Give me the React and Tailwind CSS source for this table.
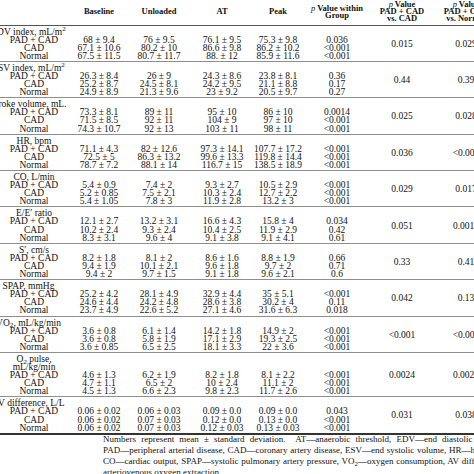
const groups = [
  {
    label: [<>EDV index, mL/m<sup>2</sup></>],
    long: true,
    cols: [
      ["68 ± 9.4", "67.1 ± 10.6", "67.5 ± 11.5"],
      ["76 ± 9.5", "80.2 ± 10", "80.7 ± 11.7"],
      ["76.1 ± 9.5", "86.6 ± 9.8", "88. ± 12"],
      ["75.3 ± 9.8", "86.2 ± 10.2", "85.9 ± 11.6"],
      ["0.036", "<0.001", "<0.001"],
    ],
    pCad: "0.015",
    pNormal: "0.029",
  },
  {
    label: [<>ESV index, mL/m<sup>2</sup></>],
    long: true,
    cols: [
      ["26.3 ± 8.4", "25.2 ± 8.7", "24.9 ± 8.9"],
      ["26 ± 9", "24.5 ± 8.1", "21.3 ± 9.6"],
      ["24.3 ± 8.6", "24.2 ± 9.5", "23 ± 9.2"],
      ["23.8 ± 8.1", "21.1 ± 8.8", "20.5 ± 9.7"],
      ["0.36", "0.17", "0.27"],
    ],
    pCad: "0.44",
    pNormal: "0.39",
  },
  {
    label: ["Stroke volume, mL."],
    long: true,
    cols: [
      ["73.3 ± 8.1", "71.5 ± 8.5", "74.3 ± 10.7"],
      ["89 ± 11", "92 ± 11", "92 ± 13"],
      ["95 ± 10", "104 ± 9", "103 ± 11"],
      ["86 ± 10", "97 ± 10", "98 ± 11"],
      ["0.0014", "<0.001", "<0.001"],
    ],
    pCad: "0.025",
    pNormal: "0.028",
  },
  {
    label: ["HR, bpm"],
    cols: [
      ["71.1 ± 4.3", "72.5 ± 5", "78.7 ± 7.2"],
      ["82 ± 12.6", "86.3 ± 13.2", "88.1 ± 14"],
      ["97.3 ± 14.1", "99.6 ± 13.3", "116.7 ± 15"],
      ["107.7 ± 17.2", "119.8 ± 14.4", "138.5 ± 18.9"],
      ["<0.001", "<0.001", "<0.001"],
    ],
    pCad: "0.036",
    pNormal: "<0.001",
  },
  {
    label: ["CO, L/min"],
    cols: [
      ["5.4 ± 0.9", "5.2 ± 0.85", "5.4 ± 1.05"],
      ["7.4 ± 2", "7.5 ± 2.1", "7.8 ± 3"],
      ["9.3 ± 2.7", "10.3 ± 2.4", "11.9 ± 2.8"],
      ["10.5 ± 2.9", "12.7 ± 2.2", "13.2 ± 3"],
      ["<0.001", "<0.001", "<0.001"],
    ],
    pCad: "0.029",
    pNormal: "0.017",
  },
  {
    label: ["E/E′ ratio"],
    cols: [
      ["12.1 ± 2.7", "10.2 ± 2.4", "8.3 ± 3.1"],
      ["13.2 ± 3.1", "9.3 ± 2.4", "9.6 ± 4"],
      ["16.6 ± 4.3", "10.4 ± 2.5", "9.1 ± 3.8"],
      ["15.8 ± 4", "11.9 ± 2.9", "9.1 ± 4.1"],
      ["0.034", "0.42", "0.61"],
    ],
    pCad: "0.051",
    pNormal: "0.0012",
  },
  {
    label: ["S′, cm/s"],
    cols: [
      ["8.2 ± 1.8", "9.4 ± 1.9", "9.4 ± 2"],
      ["8.1 ± 2", "10.1 ± 2.1", "9.7 ± 1.5"],
      ["8.6 ± 1.6", "9.6 ± 1.8", "9.1 ± 1.8"],
      ["8.8 ± 1.9", "9.7 ± 2", "9.6 ± 2.1"],
      ["0.66", "0.71", "0.6"],
    ],
    pCad: "0.33",
    pNormal: "0.41",
  },
  {
    label: ["SPAP, mmHg"],
    long: true,
    cols: [
      ["25.2 ± 4.2", "24.6 ± 4.4", "23.7 ± 4.9"],
      ["28.1 ± 4.9", "24.2 ± 4.8", "22.6 ± 5.2"],
      ["32.9 ± 4.4", "28.6 ± 3.8", "27.1 ± 4.6"],
      ["35 ± 5.1", "30.2 ± 4", "31.6 ± 6.3"],
      ["<0.001", "0.11", "0.018"],
    ],
    pCad: "0.042",
    pNormal: "0.13",
  },
  {
    label: [<>VO<sub>2</sub>, mL/kg/min</>],
    long: true,
    cols: [
      ["3.6 ± 0.8", "3.6 ± 0.8", "3.6 ± 0.85"],
      ["6.1 ± 1.4", "5.8 ± 1.9", "6.5 ± 2.5"],
      ["14.2 ± 1.8", "17.1 ± 2.9", "18.1 ± 3.3"],
      ["14.9 ± 2", "19.3 ± 2.5", "22 ± 3.6"],
      ["<0.001", "<0.001", "<0.001"],
    ],
    pCad: "<0.001",
    pNormal: "<0.001",
  },
  {
    label: [<>O<sub>2</sub> pulse,</>, "mL/kg/min"],
    cols: [
      ["4.6 ± 1.3", "4.7 ± 1.1", "4.5 ± 1.3"],
      ["6.2 ± 1.9", "6.5 ± 2", "6.6 ± 2.3"],
      ["8.2 ± 1.8", "10 ± 2.4", "9.8 ± 2.3"],
      ["8.1 ± 2.2", "11.1 ± 2", "11.7 ± 2.6"],
      ["<0.001", "<0.001", "<0.001"],
    ],
    pCad: "0.0024",
    pNormal: "0.0027",
  },
  {
    label: ["AV difference, L/L"],
    long: true,
    cols: [
      ["0.06 ± 0.02", "0.06 ± 0.02", "0.06 ± 0.02"],
      ["0.06 ± 0.03", "0.07 ± 0.03", "0.07 ± 0.03"],
      ["0.09 ± 0.0", "0.12 ± 0.0", "0.12 ± 0.03"],
      ["0.09 ± 0.0", "0.13 ± 0.0", "0.13 ± 0.03"],
      ["0.043", "<0.001", "<0.001"],
    ],
    pCad: "0.031",
    pNormal: "0.038",
  },
];

const gridCols = "grid grid-cols-[68px_62px_58px_68px_44px_74px_56px_72px]";

function Head({ children }) {
  return (
    <div className="flex flex-col items-center justify-center whitespace-nowrap text-center">
      {children}
    </div>
  );
}

function Group({ g, last }) {
  return (
    <div
      className={
        gridCols +
        " pt-[2px] pb-[1px] leading-[8.1px] " +
        (last ? "border-b-2 border-[#333]" : "border-b border-[#8e8e8e]")
      }
    >
      <div className="flex flex-col items-center whitespace-nowrap">
        {g.label.map((l, i) => (
          <div key={i} className={g.long ? "mr-[11px]" : ""}>
            {l}
          </div>
        ))}
        <div>PAD + CAD</div>
        <div>CAD</div>
        <div>Normal</div>
      </div>
      {g.cols.map((col, ci) => (
        <div key={ci} className="flex flex-col items-center whitespace-nowrap">
          {g.label.map((_, i) => (
            <div key={"s" + i}>&nbsp;</div>
          ))}
          {col.map((v, i) => (
            <div key={i}>{v}</div>
          ))}
        </div>
      ))}
      <div className="flex items-center justify-center whitespace-nowrap">{g.pCad}</div>
      <div className="flex items-center justify-center whitespace-nowrap">{g.pNormal}</div>
    </div>
  );
}

export default function App() {
  return (
    <div className="w-[474px] h-[474px] overflow-hidden bg-white text-[#111] font-['Liberation_Serif','Times_New_Roman',serif] text-[9.5px]">
      <div className="w-[502px]">
        {/* header */}
        <div className={gridCols + " h-[25.5px] pt-[1px] pb-[3px] border-b-[1.5px] border-[#555] font-bold text-[8.5px] leading-[7px]"}>
          <div />
          <Head>Baseline</Head>
          <Head>Unloaded</Head>
          <Head>AT</Head>
          <Head>Peak</Head>
          <Head>
            <div><i className="font-normal">p</i> Value within</div>
            <div>Group</div>
          </Head>
          <Head>
            <div><i className="font-normal">p</i> Value</div>
            <div>PAD + CAD</div>
            <div>vs. CAD</div>
          </Head>
          <Head>
            <div><i className="font-normal">p</i> Value</div>
            <div>PAD + CAD</div>
            <div>vs. Normal</div>
          </Head>
        </div>

        {groups.map((g, i) => (
          <Group key={i} g={g} last={i === groups.length - 1} />
        ))}
      </div>

      {/* footnote */}
      <div className="ml-[103px] w-[404px] text-[9px] leading-[10.8px] -mt-[0.5px]">
        <div className="text-justify [text-align-last:justify]">
          Numbers represent mean ± standard deviation.&nbsp; AT—anaerobic threshold, EDV—end diastolic volume,
        </div>
        <div className="text-justify [text-align-last:justify]">
          PAD—peripheral arterial disease, CAD—coronary artery disease, ESV—end systolic volume, HR—heart rate,
        </div>
        <div className="text-justify [text-align-last:justify]">
          CO—cardiac output, SPAP—systolic pulmonary artery pressure, VO<sub>2</sub>—oxygen consumption, AV difference—
        </div>
        <div>arteriovenous oxygen extraction.</div>
      </div>
    </div>
  );
}
